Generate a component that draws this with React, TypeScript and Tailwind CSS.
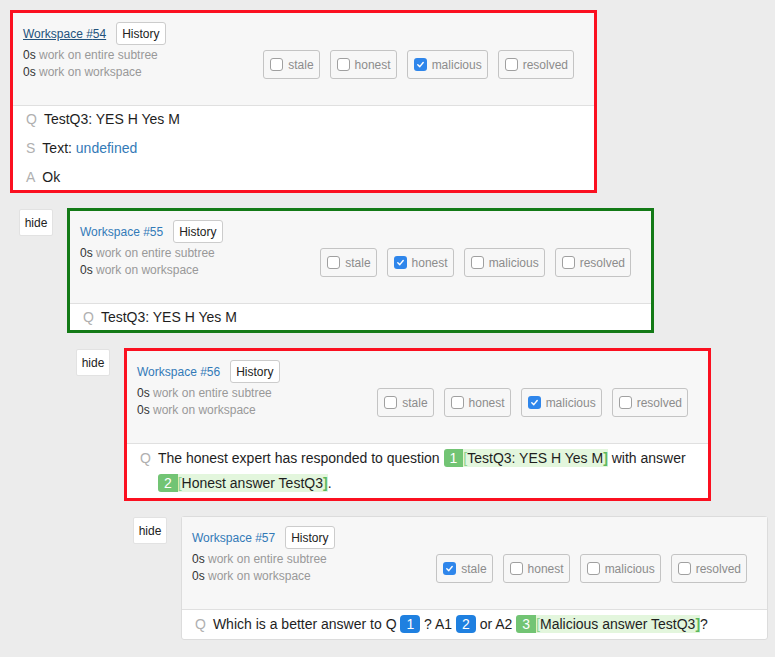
import type { ReactNode } from "react";

type Status = "stale" | "honest" | "malicious" | "resolved";

type Row = { letter: string; content: ReactNode; tall?: boolean };

type WorkspaceNode = {
  id: number;
  tone: "red" | "green" | "plain";
  active?: boolean;
  status: Status;
  rows: Row[];
  child?: WorkspaceNode;
};

const STATUSES: Status[] = ["stale", "honest", "malicious", "resolved"];

const Check = ({ checked }: { checked: boolean }) =>
  checked ? (
    <span className="flex h-[13px] w-[13px] items-center justify-center rounded-[3px] bg-[#2f86eb]">
      <svg width="9" height="9" viewBox="0 0 10 10" fill="none">
        <path d="M2 5.3 L4.2 7.4 L8 2.8" stroke="white" strokeWidth="1.6" strokeLinecap="round" strokeLinejoin="round" />
      </svg>
    </span>
  ) : (
    <span className="h-[13px] w-[13px] rounded-[3px] border border-[#a0a0a0] bg-white" />
  );

const StatusBox = ({ label, checked }: { label: Status; checked: boolean }) => (
  <label className="flex h-[29px] items-center rounded-[3px] border border-[#c4c4c4] pl-[6px] pr-[5px] text-[12px] text-[#8c8c8c]">
    <Check checked={checked} />
    <span className="ml-[5px]">{label}</span>
  </label>
);

// numbered green reference with its quoted text
const GreenRef = ({ n, text }: { n: number; text: string }) => (
  <span className="whitespace-nowrap">
    <span className="rounded-l-[3px] bg-[#72c474] px-[6px] py-[1px] text-white">{n}</span>
    <span className="bg-[#e3f6dd] py-[1px]">
      <span className="text-[#8fd48c]">[</span>
      {text}
      <span className="font-bold text-[#5cb85c]">]</span>
    </span>
  </span>
);

const BlueRef = ({ n }: { n: number }) => (
  <span className="rounded-[4px] bg-[#1f80e0] px-[6px] py-[1px] text-white">{n}</span>
);

const HideButton = () => (
  <button className="mt-[1px] h-[27px] w-[34px] shrink-0 rounded-[2px] border border-[#e2e2e2] bg-white text-[12px] text-[#222]">
    hide
  </button>
);

const Workspace = ({ node }: { node: WorkspaceNode }) => {
  const frame =
    node.tone === "red"
      ? "border-[3px] border-[#fb1020]"
      : node.tone === "green"
        ? "border-[3px] border-[#137a16]"
        : "rounded-[3px] border border-[#dcdcdc]";

  return (
    <div className={`w-[587px] bg-white ${frame}`}>
      <div className="flex h-[92px] bg-[#f7f7f7] px-[10px] pt-[9px]">
        <div className="flex-1">
          <div className="flex h-[23px] items-center">
            <a
              className={`text-[12px] ${node.active ? "text-[#23527c] underline" : "text-[#337ab7]"}`}
            >
              Workspace #{node.id}
            </a>
            <button className="ml-[10px] h-[23px] rounded-[3px] border border-[#cccccc] bg-white px-[5px] text-[12px] text-[#222]">
              History
            </button>
          </div>
          <div className="mt-[2px] text-[12px] leading-[17px]">
            <div>
              <span className="text-[#333]">0s</span> <span className="text-[#999]">work on entire subtree</span>
            </div>
            <div>
              <span className="text-[#333]">0s</span> <span className="text-[#999]">work on workspace</span>
            </div>
          </div>
        </div>
        <div className="mr-[10px] mt-[28px] flex gap-[10px] self-start">
          {STATUSES.map((s) => (
            <StatusBox key={s} label={s} checked={s === node.status} />
          ))}
        </div>
      </div>
      <div className="flex flex-col gap-[3px] border-t border-[#e0e0e0] text-[14px] text-[#1e1e1e]">
        {node.rows.map((row, i) => (
          <div
            key={i}
            className={`flex py-[2px] pl-[13px] pr-[10px] ${row.tall ? "leading-[25px]" : "leading-[22px]"}`}
          >
            <span className="mr-[7px] text-[#b0b0b0]">{row.letter}</span>
            <div className="flex-1">{row.content}</div>
          </div>
        ))}
      </div>
    </div>
  );
};

const Tree = ({ node }: { node: WorkspaceNode }) => (
  <div>
    <Workspace node={node} />
    {node.child && (
      <div className="mt-[15px] flex">
        <div className="ml-[9px] mr-[14px]">
          <HideButton />
        </div>
        <Tree node={node.child} />
      </div>
    )}
  </div>
);

const data: WorkspaceNode = {
  id: 54,
  tone: "red",
  active: true,
  status: "malicious",
  rows: [
    { letter: "Q", content: "TestQ3: YES H Yes M" },
    {
      letter: "S",
      content: (
        <>
          Text: <span className="text-[#337ab7]">undefined</span>
        </>
      ),
    },
    { letter: "A", content: "Ok" },
  ],
  child: {
    id: 55,
    tone: "green",
    status: "honest",
    rows: [{ letter: "Q", content: "TestQ3: YES H Yes M" }],
    child: {
      id: 56,
      tone: "red",
      status: "malicious",
      rows: [
        {
          letter: "Q",
          tall: true,
          content: (
            <>
              The honest expert has responded to question <GreenRef n={1} text="TestQ3: YES H Yes M" /> with answer{" "}
              <GreenRef n={2} text="Honest answer TestQ3" />.
            </>
          ),
        },
      ],
      child: {
        id: 57,
        tone: "plain",
        status: "stale",
        rows: [
          {
            letter: "Q",
            tall: true,
            content: (
              <>
                Which is a better answer to Q <BlueRef n={1} /> ? A1 <BlueRef n={2} /> or A2{" "}
                <GreenRef n={3} text="Malicious answer TestQ3" />?
              </>
            ),
          },
        ],
      },
    },
  },
};

export default function App() {
  return (
    <div className="min-h-screen bg-[#ececec] p-[10px] font-['Liberation_Sans',Arial,sans-serif]">
      <Tree node={data} />
    </div>
  );
}
